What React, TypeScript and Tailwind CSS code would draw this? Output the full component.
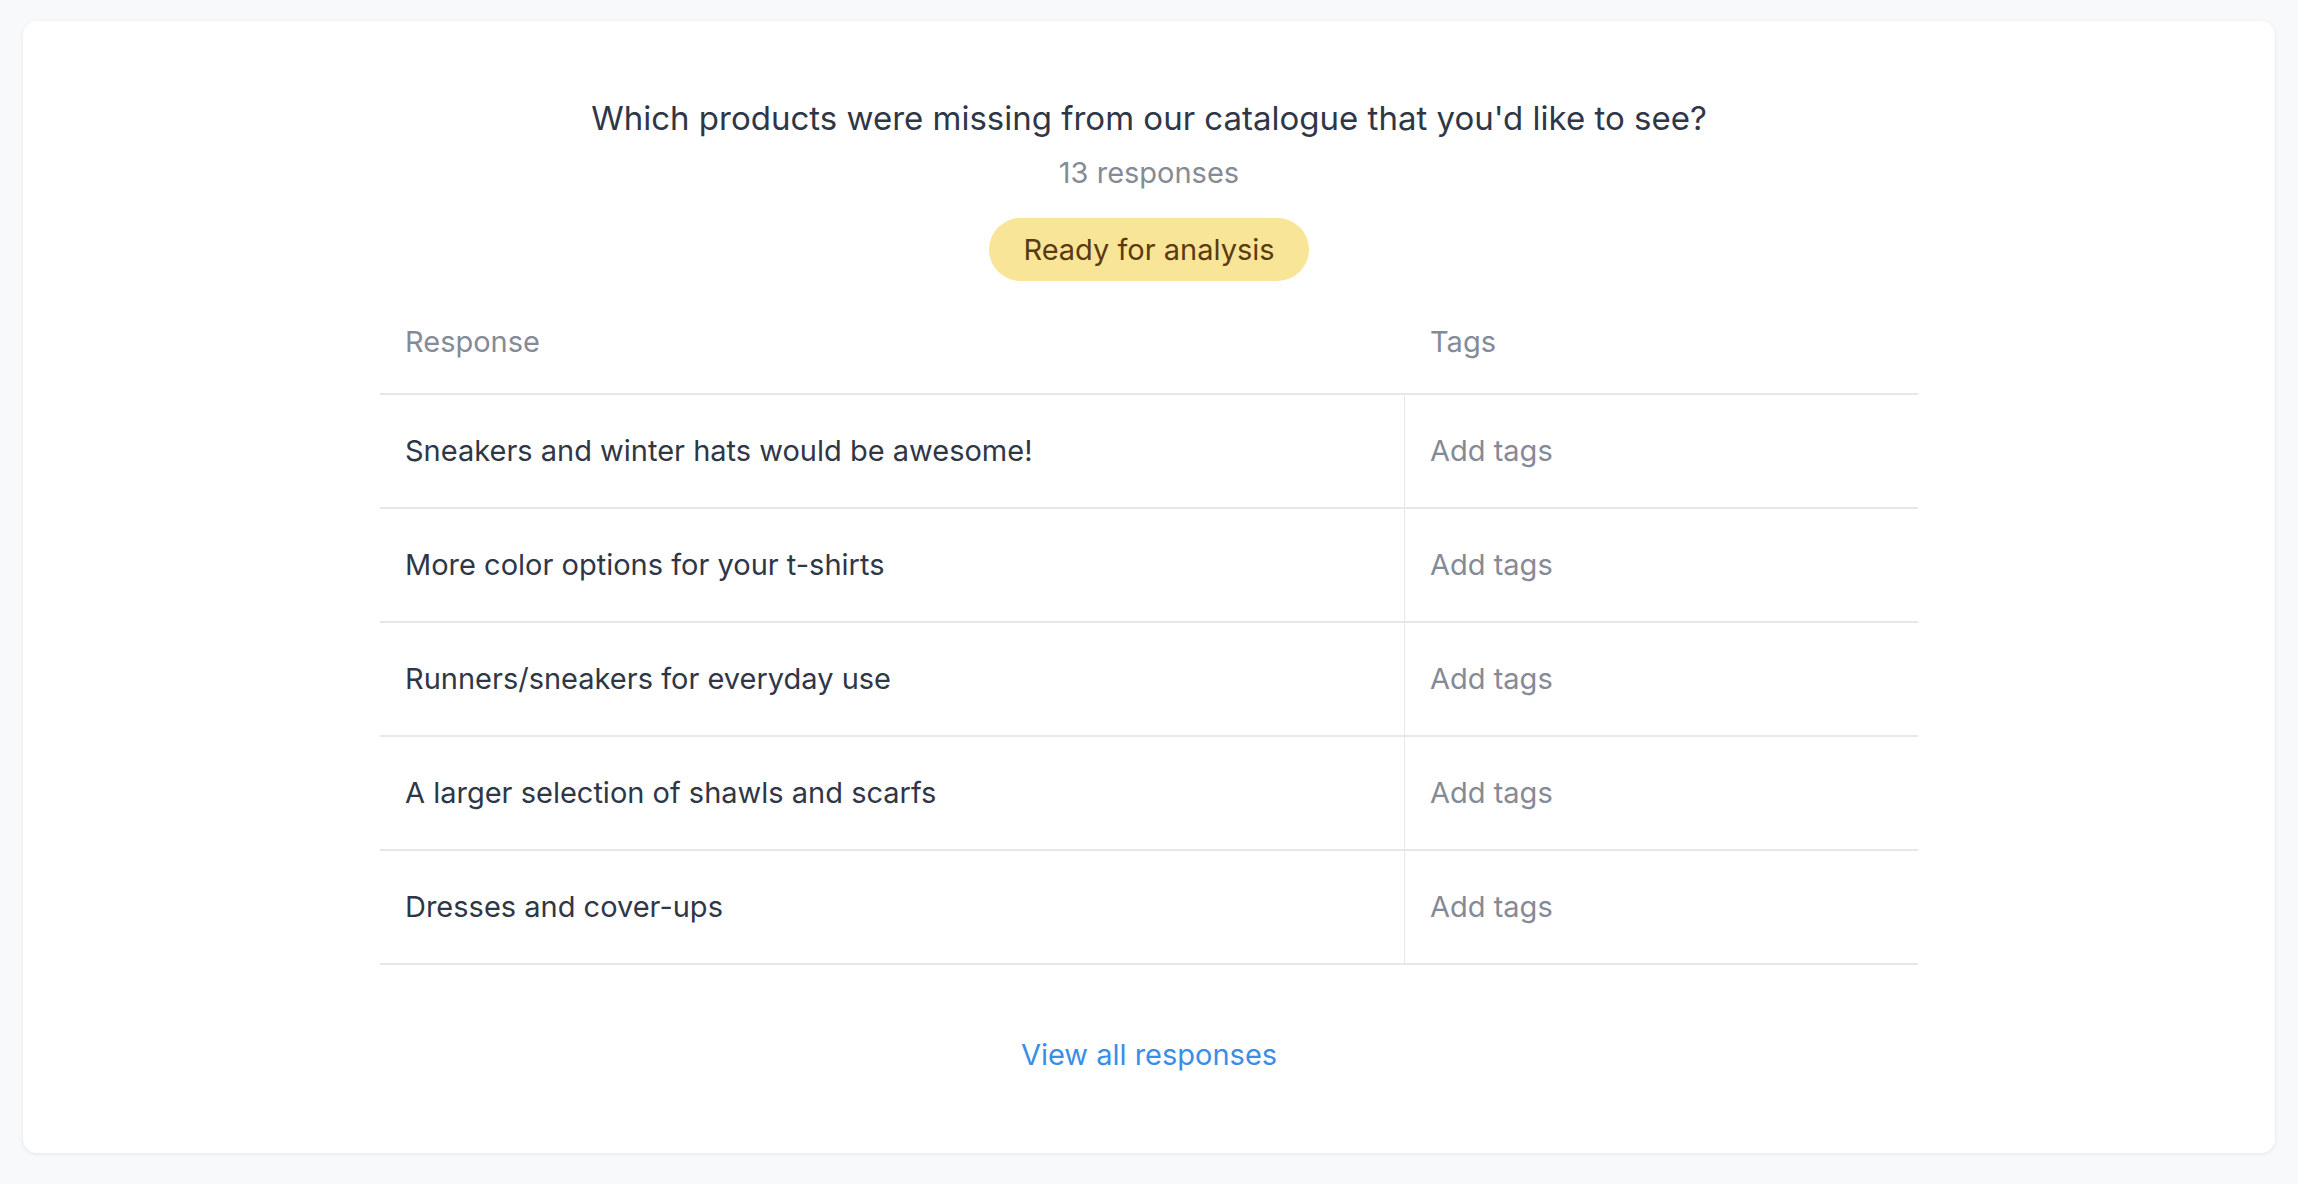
const rows = [
  'Sneakers and winter hats would be awesome!',
  'More color options for your t-shirts',
  'Runners/sneakers for everyday use',
  'A larger selection of shawls and scarfs',
  'Dresses and cover-ups',
]

export default function App() {
  return (
    <div className="min-h-screen bg-[#f8f9fb] px-[23px] pt-[21px] pb-[31px]" style={{ fontFamily: 'Inter, "Noto Sans", sans-serif' }}>
      <div className="bg-white rounded-[14px] shadow-[0_1px_4px_rgba(0,0,0,0.08)] h-[1132px] flex flex-col items-center pt-[80px]">
        <h1 className="text-[33px] leading-[50px] text-[#2f3747] -mt-[8px]">
          Which products were missing from our catalogue that you'd like to see?
        </h1>
        <div className="text-[29px] leading-[40px] text-[#858b96] mt-[10px]">13 responses</div>
        <div className="mt-[25px] h-[63px] w-[320px] rounded-full bg-[#f9e597] text-[#5b3b12] text-[29px] flex items-center justify-center">
          Ready for analysis
        </div>
        <div className="w-[1538px] mt-[10px]">
          <div className="flex h-[104px] items-center border-b-2 border-[#e6e7eb] text-[29px] text-[#858b96]">
            <div className="w-[1025px] pl-[25px]">Response</div>
            <div className="pl-[25px]">Tags</div>
          </div>
          {rows.map((r) => (
            <div key={r} className="flex h-[114px] border-b-2 border-[#e6e7eb] text-[29px]">
              <div className="w-[1025px] pl-[25px] flex items-center text-[#2f3747] border-r border-[#e6e7eb]">{r}</div>
              <div className="pl-[25px] flex items-center text-[#858b96]">Add tags</div>
            </div>
          ))}
        </div>
        <a className="mt-[68px] text-[29px] text-[#3a8ee6]" href="#">View all responses</a>
      </div>
    </div>
  )
}
